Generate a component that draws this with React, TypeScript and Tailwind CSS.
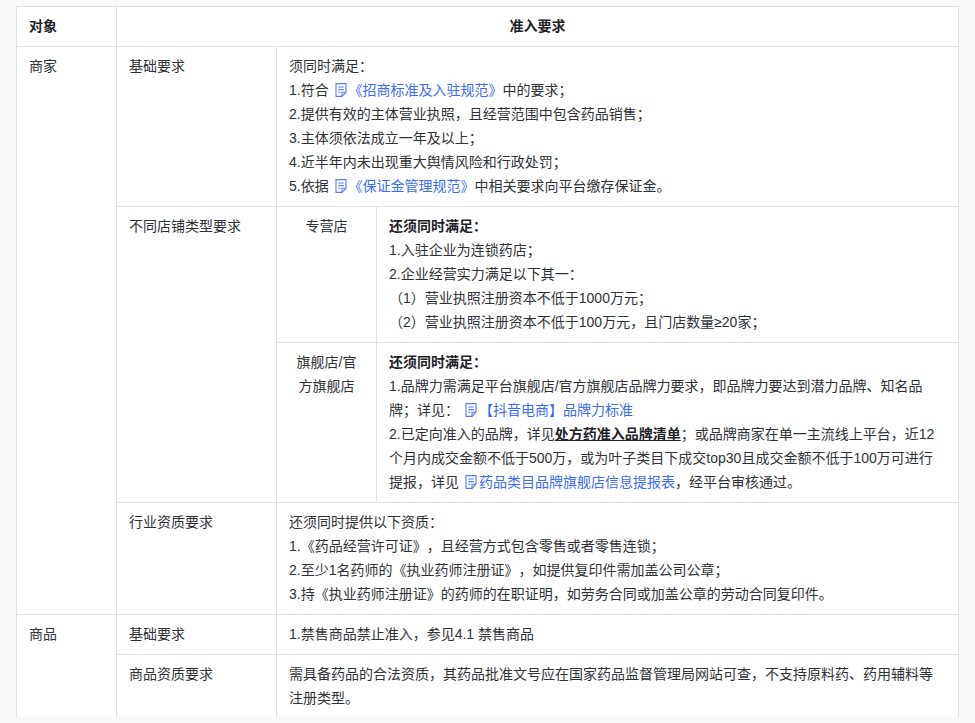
const DocIcon = () => (
  <svg viewBox="0 0 12 14" className="inline-block w-[12px] h-[14px] align-[-2px] mx-[2px] text-[#5a78f5]" fill="none" stroke="currentColor" strokeWidth="1.1">
    <path d="M1 .6h10v8.6l-4 4.2H1z" />
    <path d="M11 9.2H7v4.2" />
    <path d="M3.2 4h5.6M3.2 6.6h5.6M3.2 9.2h2.2" />
  </svg>
);

const L = ({ children }: { children: React.ReactNode }) => <span className="text-[#3b6cf6]">{children}</span>;

const td = "border border-[#e1e2e8] px-3 pt-[7px] pb-[8px] align-top";

export default function App() {
  return (
    <div className="w-[975px] h-[723px] bg-[#f9f9f9] overflow-hidden pt-[6px] pl-[16px] font-['Liberation_Sans','Noto_Sans_CJK_SC',sans-serif] text-[14px] leading-[24px] text-[#2f3237] [text-spacing-trim:space-all]">
      <div className="w-[943px] h-[711px] overflow-hidden">
        <table className="w-[943px] table-fixed border-collapse bg-white">
          <colgroup>
            <col className="w-[100px]" />
            <col className="w-[160px]" />
            <col className="w-[100px]" />
            <col />
          </colgroup>
          <tbody>
            <tr>
              <td className={`${td} font-bold text-[#1f2329]`}>对象</td>
              <td className={`${td} font-bold text-center text-[#1f2329]`} colSpan={3}>准入要求</td>
            </tr>
            <tr>
              <td className={td} rowSpan={4}>商家</td>
              <td className={td}>基础要求</td>
              <td className={td} colSpan={2}>
                <div>须同时满足：</div>
                <div>1.符合 <DocIcon /><L>《招商标准及入驻规范》</L>中的要求；</div>
                <div>2.提供有效的主体营业执照，且经营范围中包含药品销售；</div>
                <div>3.主体须依法成立一年及以上；</div>
                <div>4.近半年内未出现重大舆情风险和行政处罚；</div>
                <div>5.依据 <DocIcon /><L>《保证金管理规范》</L>中相关要求向平台缴存保证金。</div>
              </td>
            </tr>
            <tr>
              <td className={td} rowSpan={2}>不同店铺类型要求</td>
              <td className={`${td} text-center`}>专营店</td>
              <td className={td}>
                <div className="font-bold text-[#1f2329]">还须同时满足：</div>
                <div>1.入驻企业为连锁药店；</div>
                <div>2.企业经营实力满足以下其一：</div>
                <div>（1）营业执照注册资本不低于1000万元；</div>
                <div>（2）营业执照注册资本不低于100万元，且门店数量≥20家；</div>
              </td>
            </tr>
            <tr>
              <td className={`${td} text-center`}>旗舰店/官<br />方旗舰店</td>
              <td className={td}>
                <div className="font-bold text-[#1f2329]">还须同时满足：</div>
                <div>1.品牌力需满足平台旗舰店/官方旗舰店品牌力要求，即品牌力要达到潜力品牌、知名品牌；详见： <DocIcon /><L>【抖音电商】品牌力标准</L></div>
                <div>2.已定向准入的品牌，详见<span className="font-bold underline text-[#1f2329]">处方药准入品牌清单</span>；或品牌商家在单一主流线上平台，近12个月内成交金额不低于500万，或为叶子类目下成交top30且成交金额不低于100万可进行提报，详见 <DocIcon /><L>药品类目品牌旗舰店信息提报表</L>，经平台审核通过。</div>
              </td>
            </tr>
            <tr>
              <td className={td}>行业资质要求</td>
              <td className={td} colSpan={2}>
                <div>还须同时提供以下资质：</div>
                <div>1.《药品经营许可证》，且经营方式包含零售或者零售连锁；</div>
                <div>2.至少1名药师的《执业药师注册证》，如提供复印件需加盖公司公章；</div>
                <div>3.持《执业药师注册证》的药师的在职证明，如劳务合同或加盖公章的劳动合同复印件。</div>
              </td>
            </tr>
            <tr>
              <td className={td} rowSpan={2}>商品</td>
              <td className={td}>基础要求</td>
              <td className={td} colSpan={2}>1.禁售商品禁止准入，参见4.1 禁售商品</td>
            </tr>
            <tr>
              <td className={td}>商品资质要求</td>
              <td className={td} colSpan={2}>需具备药品的合法资质，其药品批准文号应在国家药品监督管理局网站可查，不支持原料药、药用辅料等注册类型。</td>
            </tr>
          </tbody>
        </table>
      </div>
    </div>
  );
}
